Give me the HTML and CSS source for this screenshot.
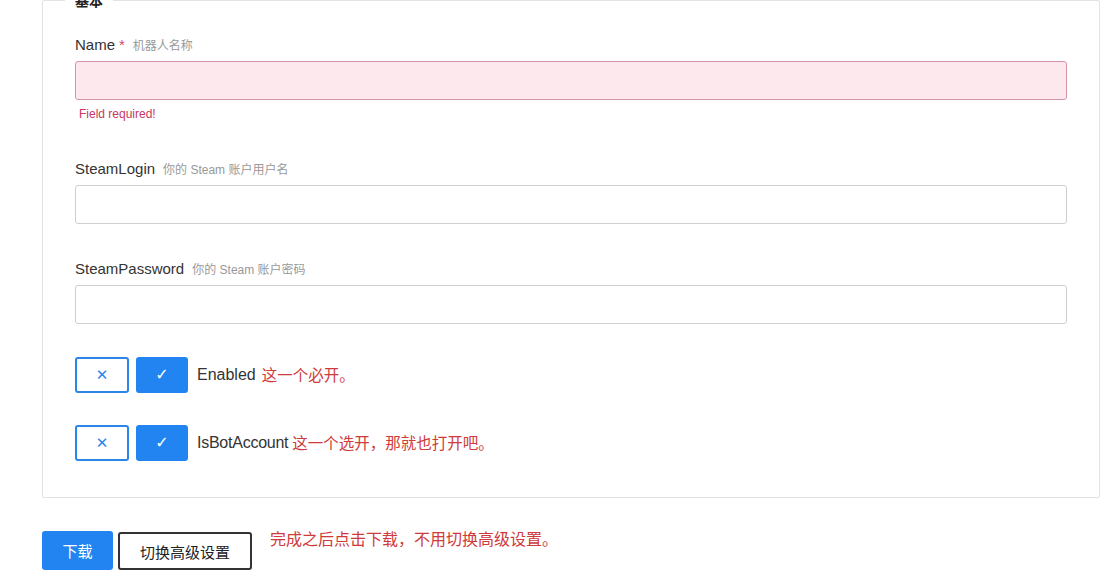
FILE: index.html
```html
<!DOCTYPE html>
<html lang="zh-CN">
<head>
<meta charset="utf-8">
<title>Bot config</title>
<link rel="stylesheet" href="styles.css">
</head>
<body>
<div class="page">
  <fieldset class="section">
    <legend class="section-title">基本</legend>

    <div class="field field-error">
      <label class="field-label">Name<span class="req">*</span><span class="hint">机器人名称</span></label>
      <input class="text-input invalid" type="text">
      <div class="error-msg">Field required!</div>
    </div>

    <div class="field">
      <label class="field-label">SteamLogin<span class="hint">你的 Steam 账户用户名</span></label>
      <input class="text-input" type="text">
    </div>

    <div class="field field-last">
      <label class="field-label">SteamPassword<span class="hint">你的 Steam 账户密码</span></label>
      <input class="text-input" type="password">
    </div>

    <div class="toggle-row">
      <button class="tog tog-off">✕</button>
      <button class="tog tog-on">✓</button>
      <span class="toggle-label">Enabled</span>
      <span class="note">这一个必开。</span>
    </div>

    <div class="toggle-row">
      <button class="tog tog-off">✕</button>
      <button class="tog tog-on">✓</button>
      <span class="toggle-label tight">IsBotAccount</span>
      <span class="note note-near">这一个选开，那就也打开吧。</span>
    </div>
  </fieldset>

  <div class="actions">
    <button class="btn btn-primary">下载</button>
    <button class="btn btn-outline">切换高级设置</button>
    <span class="note note-big">完成之后点击下载，不用切换高级设置。</span>
  </div>
</div>
</body>
</html>
```

FILE: styles.css
```css
html, body {
  margin: 0;
  padding: 0;
  background: #fff;
}
body {
  font-family: "Liberation Sans", Arial, "Noto Sans CJK SC", sans-serif;
  color: #333;
}
.page {
  margin: -10px 10px 0 42px;
}
.section {
  margin: 0;
  border: 1px solid #e3e3e3;
  border-radius: 2px;
  padding: 25px 32px 37px 32px;
  min-width: 0;
}
.section-title {
  font-size: 14px;
  line-height: 20px;
  height: 20px;
  font-weight: bold;
  color: #222;
  padding: 0 10px;
  margin-left: -10px;
  font-family: "Noto Sans CJK SC", sans-serif;
}
.field {
  margin-bottom: 35px;
}
.field-error {
  margin-bottom: 37px;
}
.field-last {
  margin-bottom: 33px;
}
.field-label {
  display: block;
  height: 20px;
  font-size: 15px;
  line-height: 20px;
  color: #333;
  margin-bottom: 6px;
}
.req {
  color: #d9476f;
  margin-left: 4px;
}
.hint {
  font-size: 12px;
  line-height: 12px;
  color: #999;
  margin-left: 8px;
}
.text-input {
  display: block;
  box-sizing: border-box;
  width: 100%;
  height: 39px;
  margin: 0;
  border: 1px solid #cfcfcf;
  border-radius: 3px;
  background: #fff;
  font-size: 15px;
  padding: 0 10px;
}
.text-input.invalid {
  background: #fde8ed;
  border-color: #d595a8;
}
.error-msg {
  font-size: 12px;
  line-height: 16px;
  height: 16px;
  margin-top: 6px;
  padding-left: 4px;
  color: #c7365f;
}
.toggle-row {
  display: flex;
  align-items: center;
  height: 35px;
  margin-bottom: 33px;
}
.toggle-row:last-child {
  margin-bottom: 0;
}
.tog {
  box-sizing: border-box;
  height: 36px;
  border-radius: 3px;
  padding: 0;
  margin: 0;
  font-family: "DejaVu Sans", sans-serif;
}
.tog-off {
  width: 54px;
  border: 2px solid #2a86e8;
  background: #fff;
  color: #2a86e8;
  font-size: 15px;
  font-weight: bold;
}
.tog-on {
  width: 52px;
  margin-left: 7px;
  border: 2px solid #2184f0;
  background: #2184f0;
  color: #fff;
  font-size: 16px;
  font-weight: bold;
}
.toggle-label {
  font-size: 16px;
  color: #333;
  margin-left: 9px;
}
.toggle-label.tight {
  letter-spacing: -0.25px;
}
.note {
  font-family: "Noto Sans CJK SC", sans-serif;
  font-size: 15.5px;
  color: #cf3a3a;
  margin-left: 6px;
  position: relative;
  top: -1px;
}
.note-near {
  margin-left: 4px;
}
.actions {
  display: flex;
  align-items: flex-start;
  margin-top: 33px;
}
.btn {
  box-sizing: border-box;
  height: 39px;
  margin: 0;
  border-radius: 3px;
  font-size: 15px;
  font-family: "Noto Sans CJK SC", sans-serif;
}
.btn-primary {
  width: 71px;
  background: #2184f0;
  border: none;
  color: #fff;
}
.btn-outline {
  width: 134px;
  margin-left: 5px;
  margin-top: 1px;
  height: 38px;
  background: #fff;
  border: 2px solid #333;
  color: #222;
}
.note-big {
  font-size: 16px;
  margin-left: 18px;
  top: -5px;
}
```
